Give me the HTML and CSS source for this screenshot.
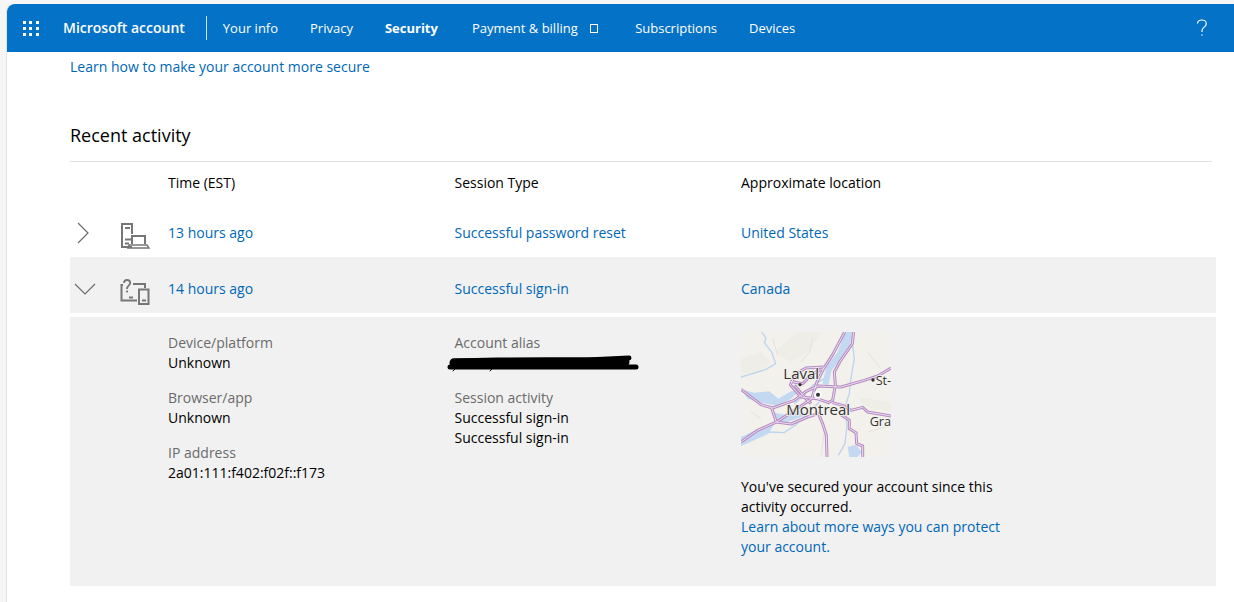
FILE: index.html
```html
<!DOCTYPE html>
<html lang="en">
<head>
  <meta charset="UTF-8">
  <meta name="viewport" content="width=device-width, initial-scale=1.0">
  <title>Microsoft account | Recent activity</title>
  <link rel="stylesheet" href="styles.css">
</head>
<body>

<div class="page">
  <header class="topbar">
    <button class="launcher" type="button" aria-label="All apps">
      <svg width="17" height="17" viewBox="0 0 17 17" fill="#fff">
        <path d="M0 1h3v3H0zM6 1h3v3H6zM13 1h3v3h-3zM0 7h3v3H0zM6 7h3v3H6zM13 7h3v3h-3zM0 13h3v3H0zM6 13h3v3H6zM13 13h3v3h-3z"/>
      </svg>
    </button>
    <a class="brand" href="#">Microsoft account</a>
    <nav class="nav">
      <a href="#">Your info</a>
      <a href="#">Privacy</a>
      <a class="active" href="#">Security</a>
      <a class="has-menu" href="#">Payment &amp; billing <span class="caret"></span></a>
      <a href="#">Subscriptions</a>
      <a href="#">Devices</a>
    </nav>
    <button class="help" type="button" aria-label="Help">
      <svg width="12" height="18" viewBox="0 0 12 18" fill="none" stroke="#fff" stroke-width="1.2">
        <path d="M1.5 4.5C1.5 2.2 3.300 1 5.800 1C8.400 1 10.300 2.300 10.300 4.700C10.300 8 6 8.200 6 11.500V13"/>
        <path d="M5.200 16h1.600"/>
      </svg>
    </button>
  </header>

  <main class="content">
    <a class="learn" href="#">Learn how to make your account more secure</a>
    <h1>Recent activity</h1>

    <table class="activity">
      <colgroup>
        <col class="col-toggle">
        <col class="col-icon">
        <col class="col-time">
        <col class="col-type">
        <col>
      </colgroup>
      <thead>
        <tr>
          <td></td>
          <td></td>
          <th scope="col">Time (EST)</th>
          <th scope="col">Session Type</th>
          <th scope="col">Approximate location</th>
        </tr>
      </thead>
      <tbody>
        <tr class="row">
          <td>
            <button class="toggle" type="button" aria-label="Expand">
              <svg width="22" height="22" viewBox="0 0 22 22" fill="none" stroke="#6b6b6b" stroke-width="1.2"><path d="M4 1L14 11L4 21"/></svg>
            </button>
          </td>
          <td>
            <svg class="device" width="30" height="28" viewBox="0 0 30 28" fill="none" stroke="#767676" stroke-width="2">
              <path d="M12 25H2V2H12V12M5 6H10M5 17.500H11M5 21.500H9"/>
              <path d="M12 22V14H25V22"/>
              <path d="M9 23H27L29 26H8Z" stroke-width="1.500"/>
            </svg>
          </td>
          <td><a href="#">13 hours ago</a></td>
          <td><a href="#">Successful password reset</a></td>
          <td><a href="#">United States</a></td>
        </tr>
        <tr class="row open">
          <td>
            <button class="toggle" type="button" aria-label="Collapse">
              <svg width="22" height="22" viewBox="0 0 22 22" fill="none" stroke="#6b6b6b" stroke-width="1.2"><path d="M1 6L11 16L21 6"/></svg>
            </button>
          </td>
          <td>
            <svg class="device" width="30" height="28" viewBox="0 0 30 28" fill="none" stroke="#767676" stroke-width="2">
              <path d="M3 7H1.500V22.500H17M13 6H25V10M9 19.500H13"/>
              <path d="M19 11.500H28.500V26H19ZM22 22.500H26"/>
              <path d="M4 5C4 3 5 2 7 2C9 2 10.200 3 10.200 5C10.200 7.500 7 7.500 7 11M7 12.500V14.500" stroke-width="1.800"/>
            </svg>
          </td>
          <td><a href="#">14 hours ago</a></td>
          <td><a href="#">Successful sign-in</a></td>
          <td><a href="#">Canada</a></td>
        </tr>
        <tr class="details">
          <td></td>
          <td></td>
          <td>
            <dl>
              <dt>Device/platform</dt>
              <dd>Unknown</dd>
              <dt>Browser/app</dt>
              <dd>Unknown</dd>
              <dt>IP address</dt>
              <dd>2a01:111:f402:f02f::f173</dd>
            </dl>
          </td>
          <td>
            <dl>
              <dt>Account alias</dt>
              <dd class="alias">
                <svg width="192" height="17" viewBox="0 0 192 17" fill="none" stroke="#000" stroke-linecap="round">
                  <path d="M6 6L50 5H140L182 3" stroke-width="5"/>
                  <path d="M7 8L100 7L178 7" stroke-width="9"/>
                  <path d="M3 12H189" stroke-width="5"/>
                  <path d="M8 14L6 16M45 14L43 16" stroke-width="1"/>
                </svg>
              </dd>
              <dt>Session activity</dt>
              <dd>Successful sign-in</dd>
              <dd>Successful sign-in</dd>
            </dl>
          </td>
          <td>
            <svg class="map" width="150" height="125" viewBox="0 0 450 375" role="img" aria-label="Map of Montreal">
              <rect width="450" height="375" fill="#f3f1ec"/>
              <g fill="#eeede6">
                <path d="M100 60L170 0H240L210 50L150 90Z"/>
                <path d="M0 80L60 60L90 90L40 130L0 120Z"/>
                <path d="M350 195L450 210V240L380 225Z"/>
              </g>
              <g fill="#c3d9f2">
                <path d="M312 0H340L325 40L295 85L272 115L262 160L244 155L256 105L290 60Z"/>
                <path d="M0 172L40 182L85 178L112 200L150 178L180 174L150 200L110 222L60 212L20 200Z"/>
                <path d="M92 240L130 248L180 238L200 248L140 270L104 272Z"/>
                <path d="M0 315L40 296L75 280L100 275L82 305L40 325L0 342Z"/>
                <path d="M320 345L345 338L362 360L350 375H325Z"/>
              </g>
              <g fill="none" stroke="#bdd4ef" stroke-width="4">
                <path d="M62 0L75 18L70 32L92 60L104 95L75 112L25 128L0 135"/>
                <path d="M335 40L340 80L328 150L325 185L312 225L318 280L312 335L292 370"/>
                <path d="M80 300L130 302L165 278L205 240L235 210"/>
                <path d="M185 195L215 160L250 140M160 215L190 190"/>
              </g>
              <g fill="none" stroke="#e3e2dc" stroke-width="3">
                <path d="M110 70L95 20M180 90L205 60L215 20M30 240L60 260M250 300L240 375M380 60L420 110M380 300L450 280"/>
              </g>
              <g fill="none" stroke-linejoin="round">
                <g stroke="#b78cc2" stroke-width="9">
                  <path d="M311 0L275 68L248 110L228 150L212 200L180 222L110 268L50 295L0 330"/>
                  <path d="M338 0L334 35L296 90L280 120L283 160L275 205L262 212L228 200L180 195L148 158L165 125L195 108L248 105"/>
                  <path d="M148 148L185 155L215 125L250 108M160 160L195 200L210 215"/>
                  <path d="M450 108L410 132L370 145L300 165L232 162L195 178L160 205L95 228L60 218L0 172"/>
                  <path d="M92 228L106 270L150 276L200 255L232 245L245 275L256 310L258 375"/>
                  <path d="M275 212L305 220L330 235L365 226L380 240L450 252"/>
                  <path d="M300 248L325 265L325 290L345 302L347 335L365 342V375"/>
                </g>
                <g stroke="#eadcf0" stroke-width="3">
                  <path d="M311 0L275 68L248 110L228 150L212 200L180 222L110 268L50 295L0 330"/>
                  <path d="M338 0L334 35L296 90L280 120L283 160L275 205L262 212L228 200L180 195L148 158L165 125L195 108L248 105"/>
                  <path d="M148 148L185 155L215 125L250 108M160 160L195 200L210 215"/>
                  <path d="M450 108L410 132L370 145L300 165L232 162L195 178L160 205L95 228L60 218L0 172"/>
                  <path d="M92 228L106 270L150 276L200 255L232 245L245 275L256 310L258 375"/>
                  <path d="M275 212L305 220L330 235L365 226L380 240L450 252"/>
                  <path d="M300 248L325 265L325 290L345 302L347 335L365 342V375"/>
                </g>
              </g>
              <circle cx="231" cy="188" r="12" fill="#fff"/>
              <g fill="#333">
                <circle cx="231" cy="188" r="6"/>
                <circle cx="177" cy="158" r="5"/>
                <circle cx="396" cy="144" r="5"/>
              </g>
              <g class="map-labels">
                <text x="127" y="141">Laval</text>
                <text x="136" y="249">Montreal</text>
                <text class="small" x="404" y="158">St-</text>
                <text class="small" x="386" y="281">Gra</text>
              </g>
            </svg>
            <p>You've secured your account since this activity occurred.<br>
            <a href="#">Learn about more ways you can protect your account.</a></p>
          </td>
        </tr>
      </tbody>
    </table>
  </main>
</div>

</body>
</html>
```

FILE: styles.css
```css
* {
  box-sizing: border-box;
}

body {
  margin: 0;
  padding: 4px 0 0 6px;
  background-color: #f6f6f6;
  font-family: "Segoe UI", "Open Sans", sans-serif;
  font-size: 14px;
  line-height: 20px;
  color: #000;
}

a {
  color: #0067b8;
  text-decoration: none;
}

button {
  display: flex;
  align-items: center;
  justify-content: center;
  padding: 0;
  border: none;
  background: none;
  cursor: pointer;
}

.page {
  min-height: calc(100vh - 4px);
  background-color: #fff;
  border-left: 1px solid #e3e3e3;
  border-top-left-radius: 8px;
}

.topbar {
  display: flex;
  align-items: center;
  height: 48px;
  background-color: #0472c7;
  border-top-left-radius: 8px;
  font-size: 13px;
}

.topbar a {
  color: #fff;
}

.launcher {
  width: 48px;
  height: 48px;
}

.topbar .brand {
  margin-left: 8px;
  padding-right: 21px;
  border-right: 1px solid #cfe0ee;
  font-size: 14px;
  font-weight: 600;
  line-height: 24px;
}

.nav {
  display: flex;
  flex: 1;
  gap: 32px;
  padding-left: 16px;
}

.nav .active {
  font-weight: 700;
}

.nav .has-menu {
  padding: 0 5px 0 2px;
}

.caret {
  display: inline-block;
  width: 8px;
  height: 9px;
  margin-left: 9px;
  border: 1px solid #fff;
}

.help {
  width: 48px;
  height: 48px;
  margin-right: 8px;
}

.content {
  padding: 5px 18px 16px 63px;
}

h1 {
  margin: 45px 4px 0 0;
  padding-bottom: 13px;
  border-bottom: 1px solid #e3e3e3;
  font-size: 18px;
  font-weight: 400;
  line-height: 26px;
}

.activity {
  width: 100%;
  table-layout: fixed;
  border-collapse: separate;
  border-spacing: 0;
}

.col-toggle {
  width: 50px;
}

.col-icon {
  width: 48px;
}

.col-time,
.col-type {
  width: 25%;
}

.activity th,
.activity td {
  padding: 0;
  text-align: left;
  font-weight: 400;
}

.activity th {
  height: 39px;
  padding-top: 3px;
}

.activity .row td {
  height: 56px;
  padding-top: 8px;
}

.open td,
.details td {
  background-color: #f1f1f1;
}

.toggle {
  width: 30px;
  height: 30px;
}

.device {
  display: block;
  margin-top: 6px;
}

.activity .details td {
  padding: 15px 0 29px;
  border-top: 4px solid #fff;
  vertical-align: top;
}

dl,
dd,
p {
  margin: 0;
}

dl {
  padding-top: 1px;
}

dt {
  color: #6b6b6b;
}

dd + dt {
  margin-top: 15px;
}

.alias {
  position: relative;
  height: 20px;
}

.alias svg {
  position: absolute;
  top: 2px;
  left: -8px;
}

.map {
  display: block;
  margin-bottom: 20px;
}

.map-labels {
  fill: #333;
  stroke: #f3f1ec;
  stroke-width: 5px;
  paint-order: stroke;
  font-size: 45px;
}

.map-labels .small {
  font-size: 38px;
}

.details p {
  max-width: 276px;
}
```
